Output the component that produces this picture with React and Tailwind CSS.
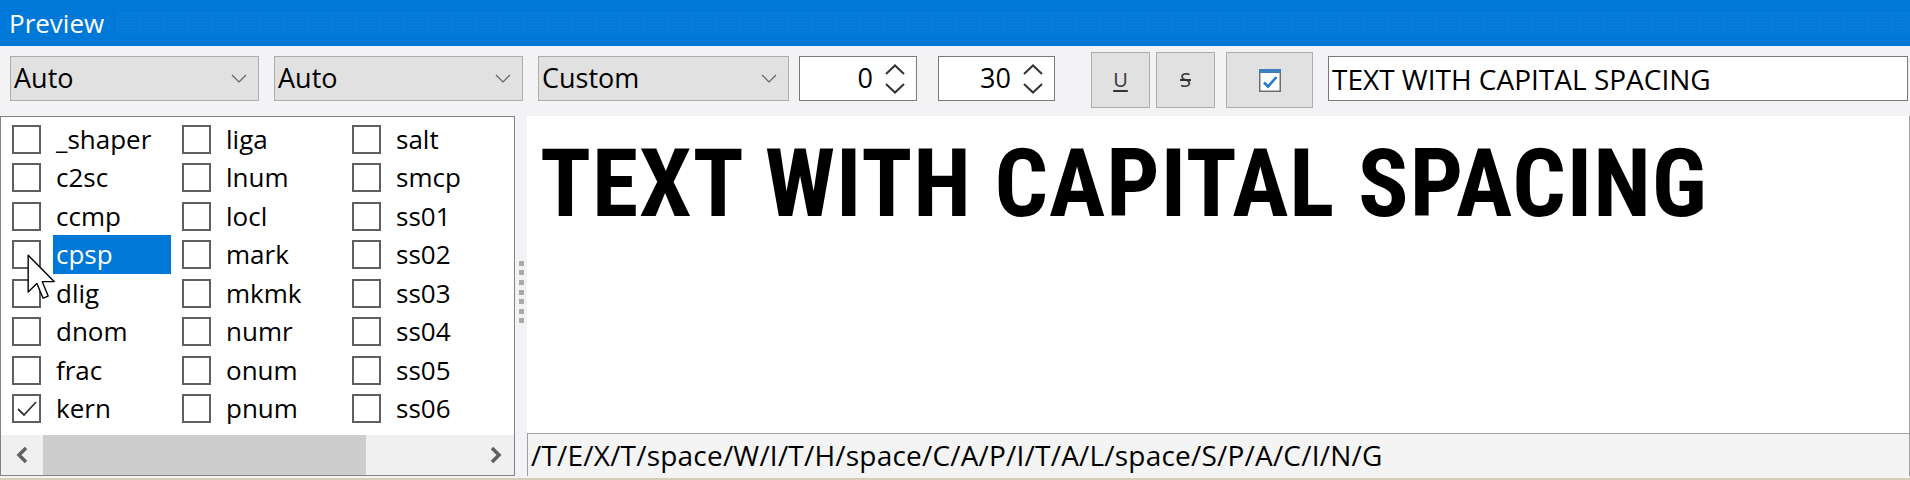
import { useState } from 'react'

const columns = [
    ['_shaper', 'c2sc', 'ccmp', 'cpsp', 'dlig', 'dnom', 'frac', 'kern'],
    ['liga', 'lnum', 'locl', 'mark', 'mkmk', 'numr', 'onum', 'pnum'],
    ['salt', 'smcp', 'ss01', 'ss02', 'ss03', 'ss04', 'ss05', 'ss06'],
]

const glyphPath = '/T/E/X/T/space/W/I/T/H/space/C/A/P/I/T/A/L/space/S/P/A/C/I/N/G'

function Chevron({ up = false, className = '' }) {
    return (
        <svg className={className} width="20" height="11" viewBox="0 0 20 11" fill="none">
            <path d={up ? 'M1 10L10 1.5L19 10' : 'M1 1L10 9.5L19 1'} stroke="#333" strokeWidth="2" />
        </svg>
    )
}

function Dropdown({ value, width }) {
    return (
        <div className={`mt-[10px] flex h-[45px] items-center justify-between border border-[#adadad] bg-[#e1e1e1] pl-[3px] pr-[11px] text-[27px] ${width}`}>
            <span>{value}</span>
            <svg width="16" height="9" viewBox="0 0 16 9" fill="none">
                <path d="M1 1l7 7 7-7" stroke="#606060" strokeWidth="1.2" />
            </svg>
        </div>
    )
}

function Spin({ value, className }) {
    return (
        <div className={`mt-[10px] flex h-[45px] items-center justify-end border border-[#7a7a7a] bg-white pr-[11px] ${className}`}>
            <span className="mr-[12px] text-[27px]">{value}</span>
            <div className="flex flex-col gap-[8px]">
                <Chevron up />
                <Chevron />
            </div>
        </div>
    )
}

function Checkbox({ checked }) {
    return (
        <div className="flex h-[29px] w-[29px] shrink-0 items-center justify-center border-2 border-[#5f5f5f] bg-white">
            {checked && (
                <svg width="22" height="18" viewBox="0 0 22 18" fill="none">
                    <path d="M2 9l6 6L20 2" stroke="#333" strokeWidth="1.8" />
                </svg>
            )}
        </div>
    )
}

export default function App() {
    const [selected] = useState('cpsp')

    return (
        <div className="flex h-[480px] w-[1910px] flex-col overflow-hidden bg-[#f3f3f6] text-[26px] text-black font-['Open_Sans',sans-serif]">
            {/* title strip */}
            <header className="flex h-[46px] shrink-0 items-center bg-[#0078d7]">
                <span className="pl-[9px] leading-none text-white">Preview</span>
                <div className="ml-[12px] h-[22px] flex-1 bg-[#037ad8] bg-[radial-gradient(circle,rgba(255,255,255,0.07)_0.8px,transparent_1px)] bg-size-[3px_3px]" />
            </header>

            {/* toolbar */}
            <div className="flex h-[70px] shrink-0 items-start pl-[10px] pr-[2px]">
                <Dropdown value="Auto" width="w-[249px]" />
                <div className="ml-[15px]"><Dropdown value="Auto" width="w-[249px]" /></div>
                <div className="ml-[15px]"><Dropdown value="Custom" width="w-[251px]" /></div>
                <Spin value="0" className="ml-[10px] w-[118px]" />
                <Spin value="30" className="ml-[21px] w-[117px]" />
                <button type="button" className="ml-[36px] mt-[6px] flex h-[56px] w-[59px] items-center justify-center border border-[#adadad] bg-[#e1e1e1] text-[20px] text-[#333] underline underline-offset-[3px]">U</button>
                <button type="button" className="ml-[6px] mt-[6px] flex h-[56px] w-[59px] items-center justify-center border border-[#adadad] bg-[#e1e1e1] text-[20px] text-[#333] line-through">S</button>
                <button type="button" className="ml-[11px] mt-[6px] flex h-[56px] w-[87px] items-center justify-center border border-[#adadad] bg-[#e1e1e1]">
                    <svg width="22" height="23" viewBox="0 0 22 23" fill="none">
                        <rect x="0.75" y="0.75" width="20.5" height="21.5" fill="#fff" stroke="#6d6d6d" strokeWidth="1.5" />
                        <rect x="0" y="0" width="22" height="4" fill="#3c7fc1" />
                        <path d="M5 13.5l4 4L17.5 8" stroke="#2a78d0" strokeWidth="2.6" />
                    </svg>
                </button>
                <div className="ml-[15px] mt-[10px] flex h-[45px] flex-1 items-center border border-[#7a7a7a] bg-white pl-[3px] text-[28px]">
                    TEXT WITH CAPITAL SPACING
                </div>
            </div>

            {/* main area */}
            <div className="flex h-[360px] shrink-0">
                {/* feature list */}
                <div className="relative flex w-[515px] shrink-0 flex-col border border-[#828282] bg-white">
                    <div className="flex flex-1 pt-[3px]">
                        {columns.map((col) => (
                            <div key={col[0]} className="flex w-[170px] flex-col">
                                {col.map((tag) => (
                                    <div key={tag} className="flex h-[38.5px] items-center pl-[11px]">
                                        <Checkbox checked={tag === 'kern'} />
                                        <span className={`ml-[12px] flex h-[39px] items-center px-[3px] ${tag === selected ? 'w-[119px] bg-[#0078d7] text-white' : ''}`}>{tag}</span>
                                    </div>
                                ))}
                            </div>
                        ))}
                    </div>
                    <div className="flex h-[40px] shrink-0 items-center bg-[#f0f0f0]">
                        <div className="flex w-[42px] justify-center">
                            <svg width="14" height="18" viewBox="0 0 14 18" fill="none"><path d="M11 2L4 9l7 7" stroke="#606060" strokeWidth="3.5" /></svg>
                        </div>
                        <div className="h-full w-[323px] bg-[#cdcdcd]" />
                        <div className="flex flex-1 justify-end pr-[11px]">
                            <svg width="14" height="18" viewBox="0 0 14 18" fill="none"><path d="M3 2l7 7-7 7" stroke="#606060" strokeWidth="3.5" /></svg>
                        </div>
                    </div>

                    {/* mouse pointer */}
                    <svg className="absolute left-[26px] top-[137px]" width="29" height="46" viewBox="0 0 12.6 20" fill="none">
                        <path d="M0.5 0.5V16.5L4.3 12.8L7 19.2L9.2 18.3L6.6 12H11.8Z" fill="#fff" stroke="#000" strokeWidth="0.6" strokeLinejoin="round" />
                    </svg>
                </div>

                {/* splitter */}
                <div className="flex w-[12px] shrink-0 flex-col items-center justify-center gap-[4.6px] pb-[8px]">
                    {[0, 1, 2, 3, 4, 5, 6].map((i) => (
                        <div key={i} className="h-[5px] w-[5px] bg-[#a9a9a9]" />
                    ))}
                </div>

                {/* rendered preview */}
                <div className="flex flex-1 flex-col border-r border-[#a0a0a0] bg-white">
                    <div className="flex-1 pl-[13px] pt-[21px]">
                        <p className="text-[94px] font-bold leading-none tracking-[1px] text-black [font-stretch:condensed] font-['Roboto_Condensed','Liberation_Sans_Narrow','DejaVu_Sans_Condensed',sans-serif]">
                            TEXT WITH CAPITAL SPACING
                        </p>
                    </div>
                    <div className="flex h-[43px] items-center border-l border-t border-[#a0a0a0] bg-[#f4f4f4] pl-[3px] text-[28px] tracking-[0.2px]">
                        {glyphPath}
                    </div>
                </div>
            </div>

            <div className="h-[2px] shrink-0" />
            <div className="h-[2px] shrink-0 bg-[#d6cfb8]" />
        </div>
    )
}
